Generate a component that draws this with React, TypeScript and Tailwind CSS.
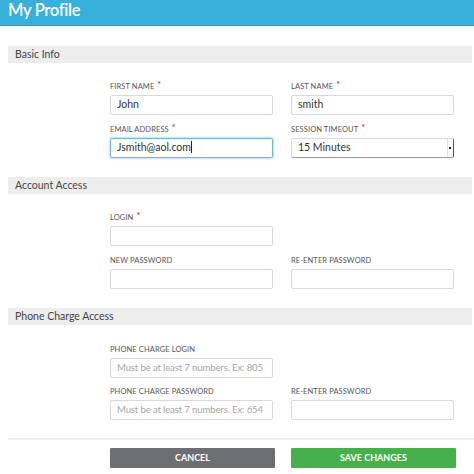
import React from "react";

const font = { fontFamily: "Lato, 'Open Sans', sans-serif" };

function Label({ text, required }: { text: string; required?: boolean }) {
  return (
    <div className="h-[10px] mb-[3px] flex items-center text-[7.5px] leading-none uppercase text-[#555] tracking-[0.1px]">
      <span>{text}</span>
      {required && (
        <span className="ml-[3px] -mt-[5px] text-[#d0021b] text-[9px] leading-none">*</span>
      )}
    </div>
  );
}

function Field({
  label,
  required,
  value,
  placeholder,
  focused,
}: {
  label: string;
  required?: boolean;
  value?: string;
  placeholder?: string;
  focused?: boolean;
}) {
  return (
    <div className="w-[163px]">
      <Label text={label} required={required} />
      <div
        className={
          "h-[20px] rounded-[2px] border bg-white pl-[6px] pr-[2px] flex items-center text-[10.5px] overflow-hidden " +
          (focused
            ? "border-[#6fb8dc] shadow-[0_0_2px_1px_rgba(111,184,220,0.45)]"
            : "border-[#d9d9d9]")
        }
      >
        {value ? (
          <span className="text-[#333]">
            {value}
            {focused && <span className="inline-block w-px h-[12px] bg-[#222] align-middle -mt-[2px]" />}
          </span>
        ) : (
          <span className="text-[#a6a6a6] text-[9.6px] tracking-[-0.15px] whitespace-nowrap">{placeholder}</span>
        )}
      </div>
    </div>
  );
}

function SelectField() {
  return (
    <div className="w-[163px]">
      <Label text="Session Timeout" required />
      <div className="h-[20px] rounded-[2px] border border-[#d9d9d9] border-r-[#555] border-b-[#9a9a9a] bg-white pl-[6px] flex items-center text-[10.5px] text-[#333]">
        <span className="flex-1">15 Minutes</span>
        <span className="w-[5px] h-full flex items-center justify-center border-l border-[#e0e0e0] mr-[1px]">
          <span className="w-[2px] h-[2px] bg-[#222]" />
        </span>
      </div>
    </div>
  );
}

function Band({ title }: { title: string }) {
  return (
    <div className="ml-[8px] mr-[2px] h-[17px] bg-[#ededed] flex items-center pl-[7px] text-[10.5px] text-[#444]">
      {title}
    </div>
  );
}

function Row({ children, className = "" }: { children: React.ReactNode; className?: string }) {
  return <div className={"pl-[110px] flex gap-[18px] " + className}>{children}</div>;
}

export default function App() {
  return (
    <div className="w-[474px] h-[474px] bg-white overflow-hidden" style={font}>
      <div className="h-[26px] bg-[#37b1db] border-b border-[#2b98c0] flex items-center pl-[8px]">
        <span className="text-white text-[16.5px] font-semibold tracking-[-0.3px] -mt-[4px]">My Profile</span>
      </div>

      <div className="mt-[20px]">
        <Band title="Basic Info" />
        <Row className="mt-[19px]">
          <Field label="First Name" required value="John" />
          <Field label="Last Name" required value="smith" />
        </Row>
        <Row className="mt-[10px]">
          <Field label="Email Address" required value="Jsmith@aol.com" focused />
          <SelectField />
        </Row>
      </div>

      <div className="mt-[19px]">
        <Band title="Account Access" />
        <Row className="mt-[19px]">
          <Field label="Login" required />
        </Row>
        <Row className="mt-[10px]">
          <Field label="New Password" />
          <Field label="Re-enter Password" />
        </Row>
      </div>

      <div className="mt-[19px]">
        <Band title="Phone Charge Access" />
        <Row className="mt-[20px]">
          <Field label="Phone Charge Login" placeholder="Must be at least 7 numbers. Ex: 805" />
        </Row>
        <Row className="mt-[9px]">
          <Field label="Phone Charge Password" placeholder="Must be at least 7 numbers. Ex: 654" />
          <Field label="Re-enter Password" />
        </Row>
      </div>

      <div className="mt-[18px] ml-[8px] h-[2px] bg-[#ececec]" />

      <Row className="mt-[8px]">
        <button className="w-[165px] h-[20px] rounded-[1px] bg-[#6d6e71] text-white text-[9px] font-bold uppercase">
          Cancel
        </button>
        <button className="w-[165px] h-[20px] -ml-[2px] rounded-[1px] bg-[#46b04a] text-white text-[9px] font-bold uppercase">
          Save Changes
        </button>
      </Row>
    </div>
  );
}
